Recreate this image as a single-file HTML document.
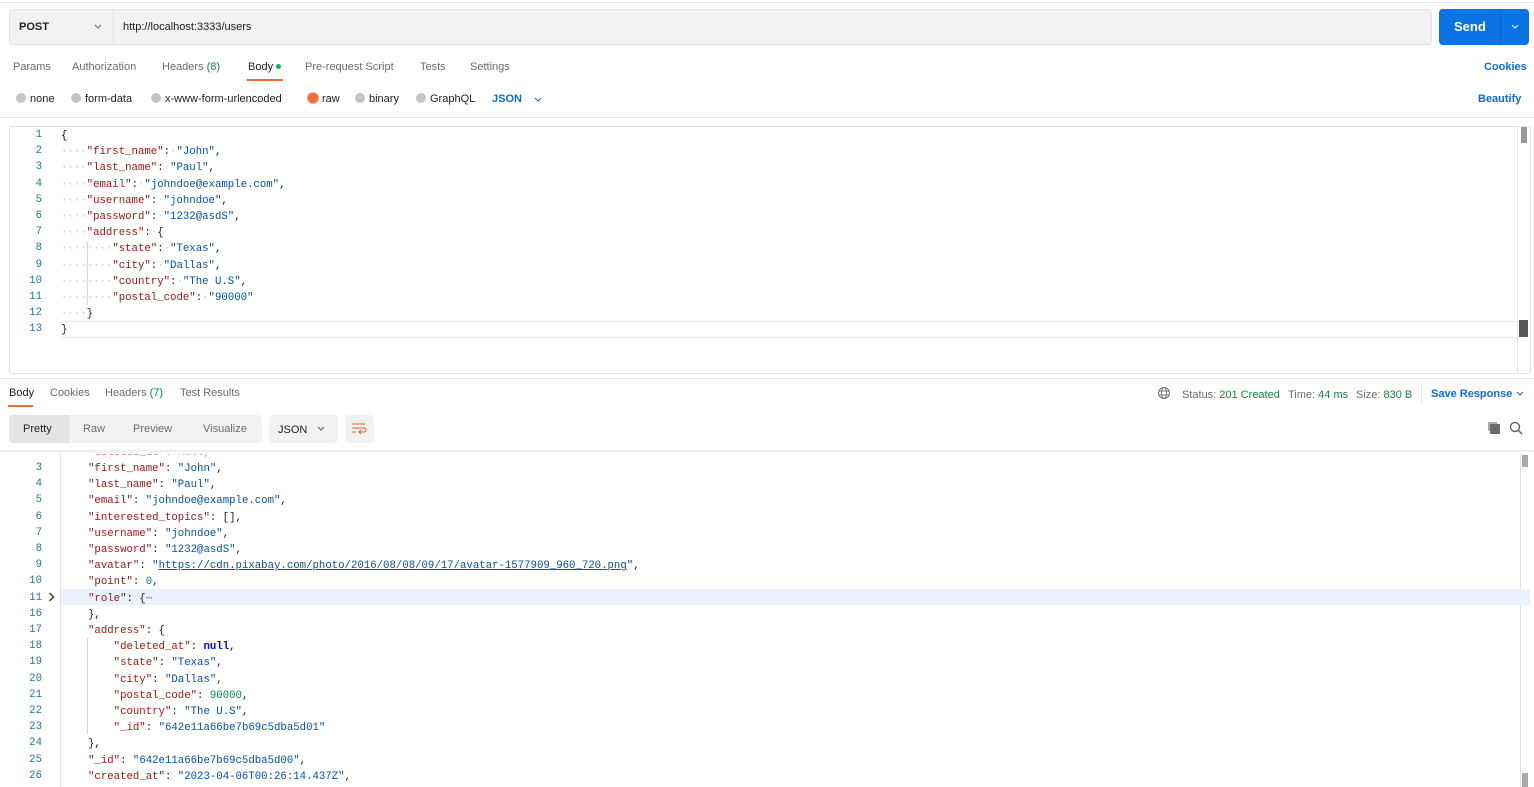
<!DOCTYPE html>
<html><head><meta charset="utf-8"><style>
*{box-sizing:border-box;margin:0;padding:0}
body{width:1534px;height:787px;overflow:hidden;background:#fff;font-family:"Liberation Sans",Arial,sans-serif;font-size:11px;color:#212121;position:relative}
.a{position:absolute}
.code{font-family:"Liberation Mono",monospace;font-size:10.7px;white-space:pre;line-height:16.2px}
.ln{position:absolute;width:42px;text-align:right;color:#237893;font-family:"Liberation Mono",monospace;font-size:10.7px;line-height:16.2px}
.k{color:#a31515}.s{color:#0451a5}.n{color:#098658}.nl{color:#0000ff;font-weight:bold}.p{color:#000}
.d{color:#c8c8c8}
.tab{position:absolute;top:61px;color:#6b6b6b;font-size:11px}
.rad{position:absolute;top:93px;font-size:11px;color:#212121}
.rad i{display:inline-block;width:10px;height:10px;border-radius:50%;background:#c4c4c4;vertical-align:-1px;margin-right:4px}
.blue{color:#0b6ee0;font-weight:bold}
.g{color:#0e8a3a}
</style></head><body>
<div class="a" style="left:0;top:2px;width:1534px;height:1px;background:#e6e6e6"></div>
<div class="a" style="left:9px;top:9px;width:1423px;height:36px;background:#f2f2f2;border:1px solid #e2e2e2;border-radius:4px"></div>
<div class="a" style="left:113px;top:10px;width:1px;height:34px;background:#e2e2e2"></div>
<div class="a" style="left:19px;top:21px;font-weight:bold;font-size:11px">POST</div>
<svg class="a" style="left:94px;top:24px" width="8" height="6"><path d="M1 1l3 3 3-3" stroke="#666" fill="none"/></svg>
<div class="a" style="left:123px;top:21px;font-size:11px">http://localhost:3333/users</div>
<div class="a" style="left:1439px;top:9px;width:90px;height:36px;background:#0b74e5;border-radius:4px"></div>
<div class="a" style="left:1500px;top:9px;width:1px;height:36px;background:#0a62c2"></div>
<div class="a" style="left:1454px;top:19px;color:#fff;font-weight:bold;font-size:13px">Send</div>
<svg class="a" style="left:1511px;top:24px" width="8" height="6"><path d="M1 1l3 3 3-3" stroke="#fff" fill="none"/></svg>
<div class="tab" style="left:13px">Params</div>
<div class="tab" style="left:72px">Authorization</div>
<div class="tab" style="left:162px">Headers <span class="g">(8)</span></div>
<div class="tab" style="left:248px;color:#212121">Body <span style="display:inline-block;width:5px;height:5px;border-radius:50%;background:#0cbb52;vertical-align:1px"></span></div>
<div class="a" style="left:247px;top:79px;width:36px;height:2px;background:#f26b3a"></div>
<div class="tab" style="left:305px">Pre-request Script</div>
<div class="tab" style="left:420px">Tests</div>
<div class="tab" style="left:470px">Settings</div>
<div class="a blue" style="left:1484px;top:61px">Cookies</div>
<div class="rad" style="left:16px"><i></i>none</div>
<div class="rad" style="left:71px"><i></i>form-data</div>
<div class="rad" style="left:151px"><i></i>x-www-form-urlencoded</div>
<div class="rad" style="left:308px"><i style="background:#f26b3a;box-shadow:0 0 0 1px #f5a07f"></i>raw</div>
<div class="rad" style="left:355px"><i></i>binary</div>
<div class="rad" style="left:416px"><i></i>GraphQL</div>
<div class="a blue" style="left:492px;top:93px">JSON</div>
<svg class="a" style="left:534px;top:97px" width="8" height="6"><path d="M1 1l3 3 3-3" stroke="#0b6ee0" fill="none"/></svg>
<div class="a blue" style="left:1478px;top:93px">Beautify</div>
<div class="a" style="left:0;top:117px;width:1534px;height:1px;background:#e6e6e6"></div>
<div class="a" style="left:9px;top:126px;width:1522px;height:248px;border:1px solid #e2e2e2;border-radius:3px"></div>
<div class="a" style="left:1517px;top:127px;width:1px;height:246px;background:#e2e2e2"></div>
<div class="a" style="left:1521px;top:127px;width:6px;height:16px;background:#999"></div>
<div class="a" style="left:1519px;top:320px;width:9px;height:17px;background:#555"></div>
<div class="a" style="left:61px;top:321px;width:1456px;height:17px;border-top:1px solid #e8e8e8;border-bottom:1px solid #e8e8e8"></div>
<div class="a" style="left:87px;top:241px;width:1px;height:64px;background:#d6d6d6"></div>
<div class="ln" style="left:0;top:127px">1<br>2<br>3<br>4<br>5<br>6<br>7<br>8<br>9<br>10<br>11<br>12<br>13</div>
<div class="a code" style="left:61px;top:128px"><span class="p">{</span>
<span class="d">····</span><span class="k">"first_name"</span>:<span class="d">·</span><span class="s">"John"</span>,
<span class="d">····</span><span class="k">"last_name"</span>:<span class="d">·</span><span class="s">"Paul"</span>,
<span class="d">····</span><span class="k">"email"</span>:<span class="d">·</span><span class="s">"johndoe@example.com"</span>,
<span class="d">····</span><span class="k">"username"</span>:<span class="d">·</span><span class="s">"johndoe"</span>,
<span class="d">····</span><span class="k">"password"</span>:<span class="d">·</span><span class="s">"1232@asdS"</span>,
<span class="d">····</span><span class="k">"address"</span>:<span class="d">·</span>{
<span class="d">········</span><span class="k">"state"</span>:<span class="d">·</span><span class="s">"Texas"</span>,
<span class="d">········</span><span class="k">"city"</span>:<span class="d">·</span><span class="s">"Dallas"</span>,
<span class="d">········</span><span class="k">"country"</span>:<span class="d">·</span><span class="s">"The U.S"</span>,
<span class="d">········</span><span class="k">"postal_code"</span>:<span class="d">·</span><span class="s">"90000"</span>
<span class="d">····</span>}
}</div>
<div class="a" style="left:0;top:378px;width:1534px;height:1px;background:#e6e6e6"></div>
<div class="a" style="left:9px;top:387px;color:#212121">Body</div>
<div class="a" style="left:8px;top:405px;width:25px;height:2px;background:#f26b3a"></div>
<div class="a" style="left:50px;top:387px;color:#6b6b6b">Cookies</div>
<div class="a" style="left:105px;top:387px;color:#6b6b6b">Headers <span class="g">(7)</span></div>
<div class="a" style="left:180px;top:387px;color:#6b6b6b">Test Results</div>
<svg class="a" style="left:1157px;top:386px" width="14" height="14"><circle cx="7" cy="7" r="5.5" stroke="#777" fill="none"/><ellipse cx="7" cy="7" rx="2.5" ry="5.5" stroke="#777" fill="none"/><path d="M1.5 5h11M1.5 9h11" stroke="#777"/></svg>
<div class="a" style="left:1182px;top:389px;color:#6b6b6b">Status: <span class="g">201 Created</span></div>
<div class="a" style="left:1288px;top:389px;color:#6b6b6b">Time: <span class="g">44 ms</span></div>
<div class="a" style="left:1356px;top:389px;color:#6b6b6b">Size: <span class="g">830 B</span></div>
<div class="a" style="left:1421px;top:384px;width:1px;height:18px;background:#e2e2e2"></div>
<div class="a blue" style="left:1431px;top:388px">Save Response</div>
<svg class="a" style="left:1516px;top:391px" width="8" height="6"><path d="M1 1l3 3 3-3" stroke="#0b6ee0" fill="none"/></svg>
<div class="a" style="left:9px;top:415px;width:253px;height:28px;background:#f2f2f2;border-radius:4px"></div>
<div class="a" style="left:9px;top:415px;width:60px;height:28px;background:#e4e4e4;border-radius:4px 0 0 4px"></div>
<div class="a" style="left:23px;top:423px">Pretty</div>
<div class="a" style="left:83px;top:423px;color:#6b6b6b">Raw</div>
<div class="a" style="left:133px;top:423px;color:#6b6b6b">Preview</div>
<div class="a" style="left:203px;top:423px;color:#6b6b6b">Visualize</div>
<div class="a" style="left:269px;top:415px;width:69px;height:28px;background:#f2f2f2;border-radius:4px"></div>
<div class="a" style="left:278px;top:424px">JSON</div>
<svg class="a" style="left:317px;top:426px" width="8" height="6"><path d="M1 1l3 3 3-3" stroke="#555" fill="none"/></svg>
<div class="a" style="left:345px;top:415px;width:29px;height:28px;background:#f2f2f2;border-radius:4px"></div>
<svg class="a" style="left:351px;top:422px" width="16" height="14"><path d="M1 2h13M1 6h12a2 2 0 010 4H8M10 8l-2 2 2 2M1 10h4" stroke="#e0602c" fill="none"/></svg>
<svg class="a" style="left:1487px;top:421px" width="14" height="14"><rect x="1" y="1" width="9" height="9" fill="#aaa"/><rect x="3" y="3" width="10" height="10" fill="#6b6b6b"/></svg>
<svg class="a" style="left:1509px;top:421px" width="14" height="14"><circle cx="6" cy="6" r="4.5" stroke="#555" fill="none" stroke-width="1.3"/><path d="M9.5 9.5l3.5 3.5" stroke="#555" stroke-width="1.3"/></svg>
<div class="a" style="left:0;top:450px;width:1534px;height:4px;background:linear-gradient(#ececec,#fff)"></div>
<div class="a" style="left:60px;top:454px;width:1px;height:333px;background:#e2e2e2"></div>
<div class="a" style="left:1520px;top:454px;width:1px;height:333px;background:#e2e2e2"></div>
<div class="a" style="left:1522px;top:455px;width:6px;height:12px;background:#aaa"></div>
<div class="a" style="left:1522px;top:773px;width:6px;height:14px;background:#aaa"></div>
<div class="a" style="left:61px;top:589px;width:1469px;height:16px;background:#e8f1fc"></div>
<div class="a" style="left:87px;top:638px;width:1px;height:96px;background:#d6d6d6"></div>
<svg class="a" style="left:48px;top:592px" width="7" height="10"><path d="M1.5 1l4 4-4 4" stroke="#333" fill="none" stroke-width="1.3"/></svg>
<div class="a code" style="left:88px;top:445px;color:#aaa;clip-path:inset(9px 0 0 0)"><span class="k" style="opacity:.6">"deleted_at"</span>: null,</div>
<div class="ln" style="left:0;top:460px">3<br>4<br>5<br>6<br>7<br>8<br>9<br>10<br>11<br>16<br>17<br>18<br>19<br>20<br>21<br>22<br>23<br>24<br>25<br>26</div>
<div class="a code" style="left:88px;top:461px"><span class="k">"first_name"</span>: <span class="s">"John"</span>,
<span class="k">"last_name"</span>: <span class="s">"Paul"</span>,
<span class="k">"email"</span>: <span class="s">"johndoe@example.com"</span>,
<span class="k">"interested_topics"</span>: [],
<span class="k">"username"</span>: <span class="s">"johndoe"</span>,
<span class="k">"password"</span>: <span class="s">"1232@asdS"</span>,
<span class="k">"avatar"</span>: <span class="s">"<u>https://cdn.pixabay.com/photo/2016/08/08/09/17/avatar-1577909_960_720.png</u>"</span>,
<span class="k">"point"</span>: <span class="n">0</span>,
<span class="k">"role"</span>: {<span style="color:#888">⋯</span>
},
<span class="k">"address"</span>: {
    <span class="k">"deleted_at"</span>: <span class="nl">null</span>,
    <span class="k">"state"</span>: <span class="s">"Texas"</span>,
    <span class="k">"city"</span>: <span class="s">"Dallas"</span>,
    <span class="k">"postal_code"</span>: <span class="n">90000</span>,
    <span class="k">"country"</span>: <span class="s">"The U.S"</span>,
    <span class="k">"_id"</span>: <span class="s">"642e11a66be7b69c5dba5d01"</span>
},
<span class="k">"_id"</span>: <span class="s">"642e11a66be7b69c5dba5d00"</span>,
<span class="k">"created_at"</span>: <span class="s">"2023-04-06T00:26:14.437Z"</span>,</div>
</body></html>
